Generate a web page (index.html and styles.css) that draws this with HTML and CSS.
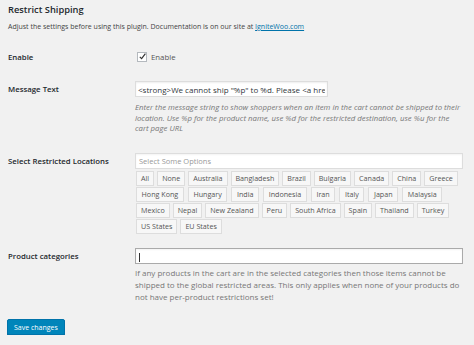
FILE: index.html
```html
<!DOCTYPE html>
<html lang="en">
	<head>
		<meta charset="utf-8" />
		<title>Restrict Shipping</title>
		<link rel="stylesheet" href="styles.css">
	</head>
	<body>
		<h2 class="titulo">Restrict Shipping</h2>
		<p class="intro">Adjust the settings before using this plugin. Documentation is on our site at <a href="#">IgniteWoo.com</a></p>

		<div class="linha linhaEnable">
			<div class="etik">Enable</div>
			<div class="campo">
				<label class="chk">
					<span class="caixa">
						<svg width="9" height="9" viewBox="0 0 9 9"><path d="M1.8 4.8 L3.6 6.6 L7.4 1.6" fill="none" stroke="#333" stroke-width="1.2"/></svg>
					</span>
					Enable
				</label>
			</div>
		</div>

		<div class="linha linhaMsg">
			<div class="etik">Message Text</div>
			<div class="campo">
				<input class="texto curto" type="text" value="<strong>We cannot ship &quot;%p&quot; to %d. Please <a href=&quot;%u&quot;>edit your cart</a></strong>">
				<p class="descr">Enter the message string to show shoppers when an item in the cart cannot be shipped to their location. Use %p for the product name, use %d for the restricted destination, use %u for the cart page URL</p>
			</div>
		</div>

		<div class="linha linhaLocais">
			<div class="etik">Select Restricted Locations</div>
			<div class="campo">
				<div class="selecao">Select Some Options</div>
				<div class="tags">
					<div class="tagLinha">
						<span class="tag">All</span>
						<span class="tag">None</span>
						<span class="tag">Australia</span>
						<span class="tag">Bangladesh</span>
						<span class="tag">Brazil</span>
						<span class="tag">Bulgaria</span>
						<span class="tag">Canada</span>
						<span class="tag">China</span>
						<span class="tag">Greece</span>
					</div>
					<div class="tagLinha largo">
						<span class="tag">Hong Kong</span>
						<span class="tag">Hungary</span>
						<span class="tag">India</span>
						<span class="tag">Indonesia</span>
						<span class="tag">Iran</span>
						<span class="tag">Italy</span>
						<span class="tag">Japan</span>
						<span class="tag">Malaysia</span>
					</div>
					<div class="tagLinha">
						<span class="tag">Mexico</span>
						<span class="tag">Nepal</span>
						<span class="tag">New Zealand</span>
						<span class="tag">Peru</span>
						<span class="tag">South Africa</span>
						<span class="tag">Spain</span>
						<span class="tag">Thailand</span>
						<span class="tag">Turkey</span>
					</div>
					<div class="tagLinha">
						<span class="tag">US States</span>
						<span class="tag">EU States</span>
					</div>
				</div>
			</div>
		</div>

		<div class="linha linhaCat">
			<div class="etik">Product categories</div>
			<div class="campo">
				<div class="selecao foco"><span class="cursor"></span></div>
				<p class="descr normal">If any products in the cart are in the selected categories then those items cannot be shipped to the global restricted areas. This only applies when none of your products do not have per-product restrictions set!</p>
			</div>
		</div>

		<button class="gravar">Save changes</button>
	</body>
</html>
```

FILE: styles.css
```css
body{margin: 0; padding: 0 8px; background: #f1f1f1; color: #444; font: 7.5px/10px "Open Sans", sans-serif;}
a{color: #0073aa;}
.titulo{font: 600 9.3px/12px "Open Sans", sans-serif; color: #23282d; margin: 4px 0 0;}
.intro{margin: 6px 0 0; line-height: 10px; font-size: 7px;}

.linha{display: grid; grid-template-columns: 127px 328px;}
.etik{font: 600 7.8px/16px "Open Sans", sans-serif; color: #23282d;}
.linhaEnable{margin-top: 17px;}
.linhaMsg{margin-top: 16px;}
.linhaLocais{margin-top: 19px;}
.linhaCat{margin-top: 14px;}

.chk{display: flex; align-items: center; gap: 4px; line-height: 16px; color: #555; font-size: 7.8px; padding-left: 2px;}
.caixa{width: 8px; height: 8px; border: 1px solid #b4b9be; background: #fff; position: relative;}
.caixa svg{position: absolute; left: 0; top: -1px;}

.texto{font: 8px "Open Sans", sans-serif; color: #32373c; height: 16px; box-sizing: border-box; border: 1px solid #ddd; box-shadow: inset 0 1px 2px rgba(0,0,0,.07); padding: 0 2px; background: #fff; display: block;}
.curto{width: 193px;}
.descr{margin: 5px 0 0; font-style: italic; font-size: 7.8px; color: #777; line-height: 10.7px;}
.descr.normal{font-style: normal; font-size: 8px; line-height: 12px; margin-top: 3px;}

.selecao{height: 16px; box-sizing: border-box; border: 1px solid #ddd; background: #fff; color: #999; padding: 0 3px; line-height: 14px; box-shadow: inset 0 1px 2px rgba(0,0,0,.05);}
.selecao.foco{border-color: #aaa;}
.cursor{display: inline-block; width: 1px; height: 9px; background: #333; vertical-align: middle;}

.tags{display: flex; flex-direction: column; gap: 1px; margin-top: 2px; padding-left: 1px;}
.tagLinha{display: flex; gap: 3px;}
.tagLinha.largo{gap: 4px;}
.tag{border: 1px solid #ddd; background: #f7f7f7; color: #555; font-size: 7.15px; padding: 0 4px; line-height: 13px;}
.largo .tag{padding: 0 4.6px;}

.gravar{display: block; margin: 16px 0 0 -1px; background: #0085ba; border: 1px solid #0073aa; border-radius: 2px; color: #fff; font: 7px "Open Sans", sans-serif; height: 16px; padding: 0 6px; box-shadow: 0 1px 0 #006799;}
```
